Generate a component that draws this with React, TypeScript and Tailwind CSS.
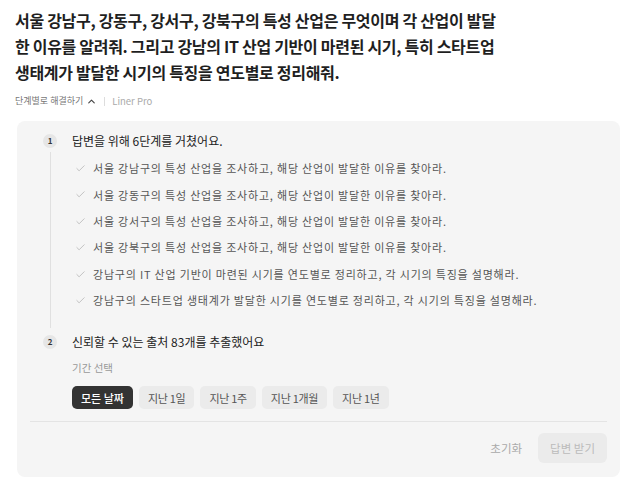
import { FC } from 'react';
import { Check, ChevronUp } from 'lucide-react';

const steps = [
  '서울 강남구의 특성 산업을 조사하고, 해당 산업이 발달한 이유를 찾아라.',
  '서울 강동구의 특성 산업을 조사하고, 해당 산업이 발달한 이유를 찾아라.',
  '서울 강서구의 특성 산업을 조사하고, 해당 산업이 발달한 이유를 찾아라.',
  '서울 강북구의 특성 산업을 조사하고, 해당 산업이 발달한 이유를 찾아라.',
  '강남구의 IT 산업 기반이 마련된 시기를 연도별로 정리하고, 각 시기의 특징을 설명해라.',
  '강남구의 스타트업 생태계가 발달한 시기를 연도별로 정리하고, 각 시기의 특징을 설명해라.',
];

const periods = ['모든 날짜', '지난 1일', '지난 1주', '지난 1개월', '지난 1년'];

const font = { fontFamily: '"Noto Sans CJK KR", "Noto Sans", sans-serif' };

const App: FC = () => {
  return (
    <div className="w-[640px] h-[481px] bg-white overflow-hidden" style={font}>
      {/* Question */}
      <div className="pl-[15px] pt-[7px]">
        <h1 className="w-[490px] text-[16px] leading-[26px] font-bold text-[#1f1f1f] tracking-[-0.3px]">
          서울 강남구, 강동구, 강서구, 강북구의 특성 산업은 무엇이며 각 산업이 발달한 이유를 알려줘. 그리고 강남의 IT 산업 기반이 마련된 시기, 특히 스타트업 생태계가 발달한 시기의 특징을 연도별로 정리해줘.
        </h1>
        <div className="flex items-center mt-[9px] text-[9px] text-[#777]">
          <span>단계별로 해결하기</span>
          <ChevronUp className="w-[11px] h-[11px] ml-[3px] text-[#444]" strokeWidth={2.5} />
          <span className="w-px h-[9px] bg-[#ddd] mx-[7px]" />
          <span className="text-[#aaa] text-[9.5px]">Liner Pro</span>
        </div>
      </div>

      {/* Card */}
      <div className="mx-[17px] mt-[13px] w-[603px] rounded-[8px] bg-[#f5f5f5] px-[13px] pt-[10px] pb-[14px]">
        <div className="pl-[13px]">
          {/* Step 1 */}
          <div className="flex">
            <div className="flex flex-col items-center w-[14px]">
              <div className="w-[14px] h-[14px] mt-[3px] rounded-full bg-[#e6e6e6] text-[8px] font-bold text-[#333] flex items-center justify-center">
                1
              </div>
              <div className="flex-1 w-px bg-[#e0e0e0] mt-[4px]" />
            </div>
            <div className="ml-[15px] pb-[14px]">
              <div className="text-[12px] leading-[20px] text-[#222]">답변을 위해 6단계를 거쳤어요.</div>
              <ul className="mt-[4px]">
                {steps.map((s) => (
                  <li key={s} className="flex items-center h-[26.4px] text-[11px] tracking-[0.8px] text-[#555]">
                    <Check className="w-[11px] h-[11px] ml-[3px] mr-[7px] text-[#aaa]" strokeWidth={1.5} />
                    <span>{s}</span>
                  </li>
                ))}
              </ul>
            </div>
          </div>

          {/* Step 2 */}
          <div className="flex mt-[4px]">
            <div className="w-[14px]">
              <div className="w-[14px] h-[14px] mt-[3px] rounded-full bg-[#e6e6e6] text-[8px] font-bold text-[#333] flex items-center justify-center">
                2
              </div>
            </div>
            <div className="ml-[15px]">
              <div className="text-[12px] leading-[20px] text-[#222]">신뢰할 수 있는 출처 83개를 추출했어요</div>
              <div className="mt-[8px] text-[10.5px] text-[#999]">기간 선택</div>
              <div className="flex gap-[6px] mt-[11px]">
                {periods.map((p, i) => (
                  <button
                    key={p}
                    className={
                      i === 0
                        ? 'h-[23px] px-[9px] rounded-[5px] bg-[#333] text-white text-[11px] font-medium'
                        : 'h-[23px] px-[9px] rounded-[5px] bg-[#ebebeb] text-[#555] text-[11px] tracking-[-0.3px]'
                    }
                  >
                    {p}
                  </button>
                ))}
              </div>
            </div>
          </div>
        </div>

        <div className="h-px bg-[#e4e4e4] mt-[12px]" />

        <div className="flex justify-end items-center gap-[16px] mt-[11px]">
          <span className="text-[11.5px] text-[#aaa]">초기화</span>
          <button className="h-[30px] px-[12px] rounded-[6px] bg-[#ebebeb] text-[11.5px] text-[#bbb]">답변 받기</button>
        </div>
      </div>
    </div>
  );
};

export default App;
